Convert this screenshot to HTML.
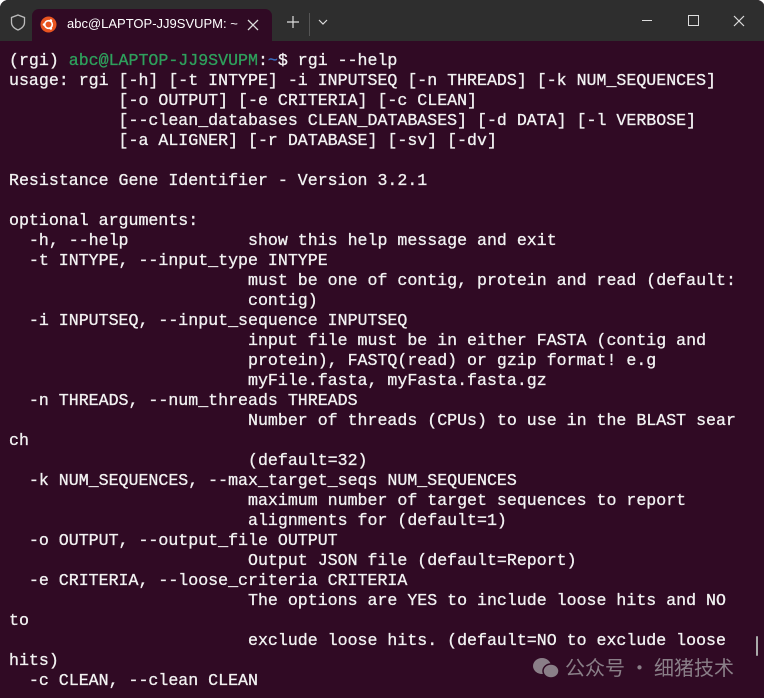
<!DOCTYPE html>
<html><head><meta charset="utf-8"><style>
html,body{margin:0;padding:0;width:764px;height:698px;overflow:hidden;background:#fff;}
.win{position:absolute;left:0;top:0;width:764px;height:698px;background:#300a24;border-radius:8px 8px 0 0;overflow:hidden;border-right:1px solid #555;}
.bar{position:absolute;left:0;top:0;width:764px;height:41px;background:#2e2e2e;}
.tab{position:absolute;left:32px;top:9px;width:240px;height:32px;background:#300a24;border-radius:7px 7px 0 0;}
.tab .t{position:absolute;left:35px;top:7px;font:13px "Liberation Sans",sans-serif;color:#fff;}
.term{position:absolute;left:9px;top:51px;margin:0;font:16.6px/20px "Liberation Mono",monospace;color:#f2f2f2;white-space:pre;-webkit-text-stroke:0.3px #f2f2f2;}
.g{color:#2ea05c;-webkit-text-stroke-color:#2ea05c}.b{color:#3a6fc4;-webkit-text-stroke-color:#3a6fc4}
.wm{position:absolute;left:565px;top:652px;font:20px "Noto Sans CJK SC",sans-serif;color:#8a7f88;}
</style></head><body><div class="win">
<div class="bar">
<svg style="position:absolute;left:10px;top:14px" width="16" height="17" viewBox="0 0 16 17"><path d="M8 1 L14.5 3.5 V8.5 C14.5 12 11.5 14.5 8 16 C4.5 14.5 1.5 12 1.5 8.5 V3.5 Z" fill="none" stroke="#bbb" stroke-width="1.3"/></svg>
<div class="tab"><svg style="position:absolute;left:8px;top:7px" width="17" height="17" viewBox="0 0 17 17"><circle cx="8.5" cy="8.5" r="8" fill="#e95420"/><circle cx="8.5" cy="8.5" r="3.8" fill="none" stroke="#fff" stroke-width="1.6"/><circle cx="4" cy="8.5" r="1.3" fill="#fff"/><circle cx="10.8" cy="4.6" r="1.3" fill="#fff"/><circle cx="10.8" cy="12.4" r="1.3" fill="#fff"/></svg><span class="t">abc@LAPTOP-JJ9SVUPM: ~</span>
<svg style="position:absolute;left:215px;top:10px" width="12" height="12"><path d="M1 1L11 11M11 1L1 11" stroke="#ddd" stroke-width="1.3"/></svg></div>
<svg style="position:absolute;left:287px;top:16px" width="12" height="12"><path d="M6 0V12M0 6H12" stroke="#ddd" stroke-width="1.2"/></svg>
<div style="position:absolute;left:309px;top:13px;width:1px;height:23px;background:#555"></div>
<svg style="position:absolute;left:318px;top:19px" width="10" height="6"><path d="M1 1L5 5L9 1" fill="none" stroke="#ddd" stroke-width="1.2"/></svg>
<div style="position:absolute;left:642px;top:20px;width:10px;height:1px;background:#ddd"></div>
<div style="position:absolute;left:688px;top:15px;width:9px;height:9px;border:1px solid #ddd"></div>
<svg style="position:absolute;left:733px;top:15px" width="12" height="12"><path d="M1 1L11 11M11 1L1 11" stroke="#ddd" stroke-width="1.2"/></svg>
</div>
<pre class="term">(rgi) <span class="g">abc@LAPTOP-JJ9SVUPM</span>:<span class="b">~</span>$ rgi --help
usage: rgi [-h] [-t INTYPE] -i INPUTSEQ [-n THREADS] [-k NUM_SEQUENCES]
           [-o OUTPUT] [-e CRITERIA] [-c CLEAN]
           [--clean_databases CLEAN_DATABASES] [-d DATA] [-l VERBOSE]
           [-a ALIGNER] [-r DATABASE] [-sv] [-dv]

Resistance Gene Identifier - Version 3.2.1

optional arguments:
  -h, --help            show this help message and exit
  -t INTYPE, --input_type INTYPE
                        must be one of contig, protein and read (default:
                        contig)
  -i INPUTSEQ, --input_sequence INPUTSEQ
                        input file must be in either FASTA (contig and
                        protein), FASTQ(read) or gzip format! e.g
                        myFile.fasta, myFasta.fasta.gz
  -n THREADS, --num_threads THREADS
                        Number of threads (CPUs) to use in the BLAST sear
ch
                        (default=32)
  -k NUM_SEQUENCES, --max_target_seqs NUM_SEQUENCES
                        maximum number of target sequences to report
                        alignments for (default=1)
  -o OUTPUT, --output_file OUTPUT
                        Output JSON file (default=Report)
  -e CRITERIA, --loose_criteria CRITERIA
                        The options are YES to include loose hits and NO
to
                        exclude loose hits. (default=NO to exclude loose
hits)
  -c CLEAN, --clean CLEAN</pre>
<div style="position:absolute;left:756px;top:636px;width:2px;height:20px;background:#aaa;border-radius:1px"></div>
<svg style="position:absolute;left:532px;top:656px" width="28" height="24"><ellipse cx="10" cy="10" rx="9" ry="8" fill="#8a7f88"/><ellipse cx="19" cy="15" rx="8" ry="7" fill="#8a7f88" stroke="#300a24" stroke-width="1.5"/></svg>
<div class="wm">公众号 · 细猪技术</div>
</div></body></html>
